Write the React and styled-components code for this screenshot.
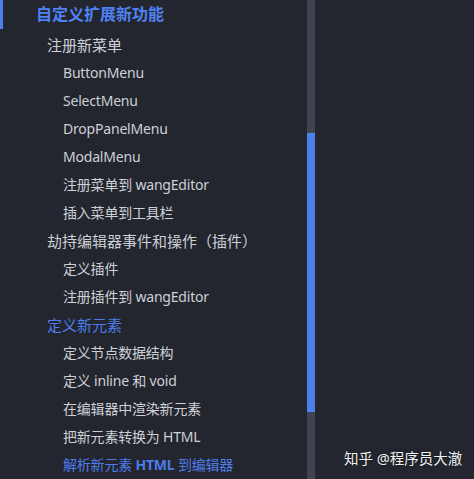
import React from 'react';
import styled, { createGlobalStyle } from 'styled-components';

const items = [
  { text: '注册新菜单', level: 2 },
  { text: 'ButtonMenu', level: 3 },
  { text: 'SelectMenu', level: 3 },
  { text: 'DropPanelMenu', level: 3 },
  { text: 'ModalMenu', level: 3 },
  { text: '注册菜单到 wangEditor', level: 3 },
  { text: '插入菜单到工具栏', level: 3 },
  { text: '劫持编辑器事件和操作（插件）', level: 2 },
  { text: '定义插件', level: 3 },
  { text: '注册插件到 wangEditor', level: 3 },
  { text: '定义新元素', level: 2, active: true },
  { text: '定义节点数据结构', level: 3 },
  { text: '定义 inline 和 void', level: 3 },
  { text: '在编辑器中渲染新元素', level: 3 },
  { text: '把新元素转换为 HTML', level: 3 },
];

const App = () => {
  return (
    <>
      <GlobalStyle />
      <Page>
        <Sidebar>
          <Nav>
            <Title>自定义扩展新功能</Title>
            {items.map((item, i) => (
              <Item key={i} $level={item.level} $active={item.active}>
                {item.text}
              </Item>
            ))}
            <Item $level={3} $active>
              解析新元素 <b>HTML</b> 到编辑器
            </Item>
          </Nav>
          <Track>
            <Thumb />
          </Track>
        </Sidebar>
        <Content />
        <Watermark>知乎 @程序员大澈</Watermark>
      </Page>
    </>
  );
};

export default App;

const GlobalStyle = createGlobalStyle`
  html, body {
    margin: 0;
    padding: 0;
    background: #23262e;
  }
  body {
    font-family: "Noto Sans", "Noto Sans CJK SC", sans-serif;
  }
`;

const Page = styled.div`
  position: relative;
  display: flex;
  width: 474px;
  height: 479px;
  overflow: hidden;
  background: #23262e;
`;

const Sidebar = styled.div`
  display: flex;
  width: 316px;
  flex-shrink: 0;
`;

const Nav = styled.div`
  flex: 1;
  display: flex;
  flex-direction: column;
`;

const Title = styled.div`
  height: 29px;
  line-height: 29px;
  padding-left: 33px;
  border-left: 3px solid #4d7ff0;
  margin-bottom: 2px;
  font-size: 16px;
  font-weight: 700;
  color: #5082f5;
  white-space: nowrap;
`;

const Item = styled.div`
  height: 28px;
  line-height: 28px;
  padding-left: ${({ $level }) => ($level === 2 ? '47px' : '63px')};
  font-size: ${({ $level }) => ($level === 2 ? '15px' : '14px')};
  letter-spacing: ${({ $level }) => ($level === 2 ? '0' : '-0.2px')};
  color: ${({ $active }) => ($active ? '#4c7ceb' : '#cdd0d6')};
  white-space: nowrap;

  b {
    font-weight: 700;
  }
`;

const Track = styled.div`
  width: 8px;
  margin-right: 1px;
  background: #3e4550;
  display: flex;
  flex-direction: column;
`;

const Thumb = styled.div`
  margin-top: 133px;
  height: 279px;
  background: #4b7fee;
`;

const Content = styled.div`
  flex: 1;
`;

const Watermark = styled.div`
  position: absolute;
  left: 344px;
  top: 447px;
  font-size: 14.5px;
  line-height: 22px;
  color: #f2f2f2;
  text-shadow: 0 0 2px rgba(0, 0, 0, 0.6);
  white-space: nowrap;
`;
